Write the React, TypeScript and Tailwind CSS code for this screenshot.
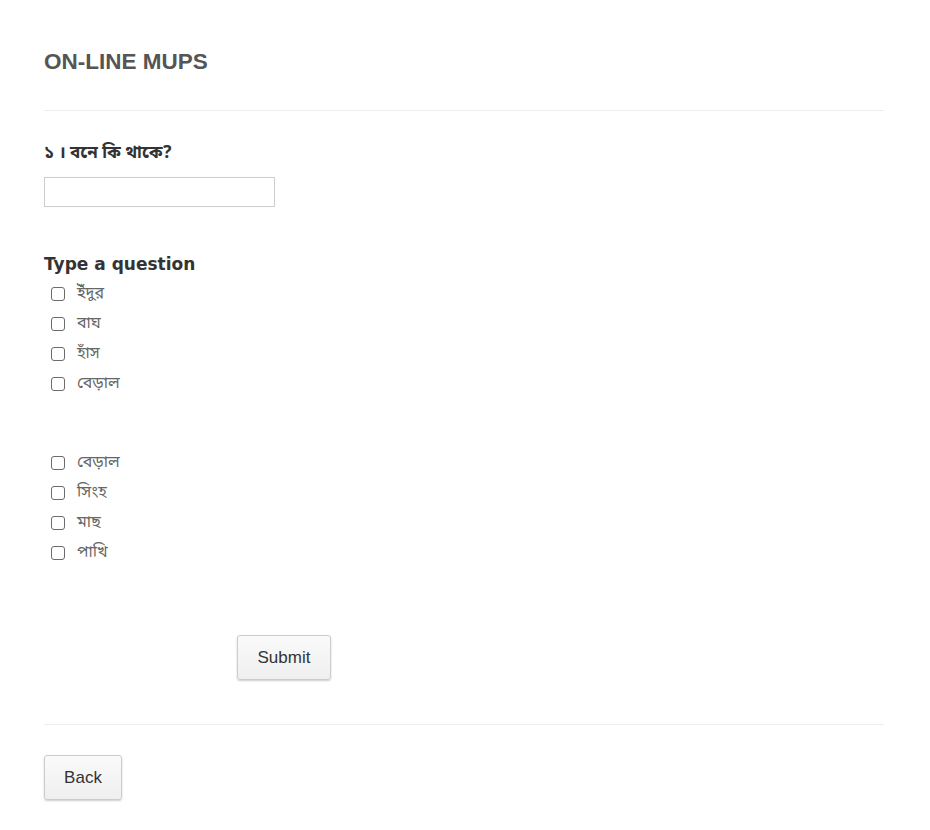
import React from "react";

const bn = "font-['Noto_Sans_Bengali','Lohit_Bengali','Noto_Serif_Bengali','Vrinda',sans-serif]";

function Check({ label }: { label: string }) {
  return (
    <label className="flex items-center h-[30px] pl-[7px]">
      <span className="w-[14px] h-[14px] border border-[#6b6b6b] rounded-[3px] bg-white shrink-0" />
      <span className={`ml-[12px] text-[16px] leading-[20px] text-[#666] ${bn}`}>{label}</span>
    </label>
  );
}

export default function App() {
  return (
    <div className="bg-white min-h-[830px] w-[930px] font-['Liberation_Sans',Arial,sans-serif] text-[#333]">
      <div className="px-[44px] w-[840px] box-content">
        <div className="pt-[50px] h-[111px] border-b border-[#eee]">
          <h1 className="text-[22.5px] leading-[24px] font-bold text-[#555]">ON-LINE MUPS</h1>
        </div>
        <div className={`mt-[33px] text-[17px] leading-[20px] font-bold text-[#333] ${bn}`}>১ । বনে কি থাকে?</div>
        <div className="mt-[13px] w-[231px] h-[30px] border border-[#ccc] bg-white" />
        <div className="mt-[46px] text-[17px] leading-[22px] font-bold text-[#333] font-['DejaVu_Sans',sans-serif]">Type a question</div>
        <div className="mt-[4px]">
          <Check label="ইঁদুর" />
          <Check label="বাঘ" />
          <Check label="হাঁস" />
          <Check label="বেড়াল" />
        </div>
        <div className="mt-[49px]">
          <Check label="বেড়াল" />
          <Check label="সিংহ" />
          <Check label="মাছ" />
          <Check label="পাখি" />
        </div>
        <div className="mt-[67px] pl-[193px] pb-[44px] border-b border-[#eee]">
          <button className="h-[45px] w-[94px] text-[17px] text-[#333] border border-[#ccc] rounded-[3px] bg-gradient-to-b from-[#fafafa] to-[#efefef] shadow-[0_1px_2px_rgba(0,0,0,0.2)]">Submit</button>
        </div>
        <div className="pt-[30px]">
          <button className="h-[45px] w-[78px] text-[17px] text-[#333] border border-[#ccc] rounded-[3px] bg-gradient-to-b from-[#fafafa] to-[#efefef] shadow-[0_1px_2px_rgba(0,0,0,0.2)]">Back</button>
        </div>
      </div>
    </div>
  );
}
